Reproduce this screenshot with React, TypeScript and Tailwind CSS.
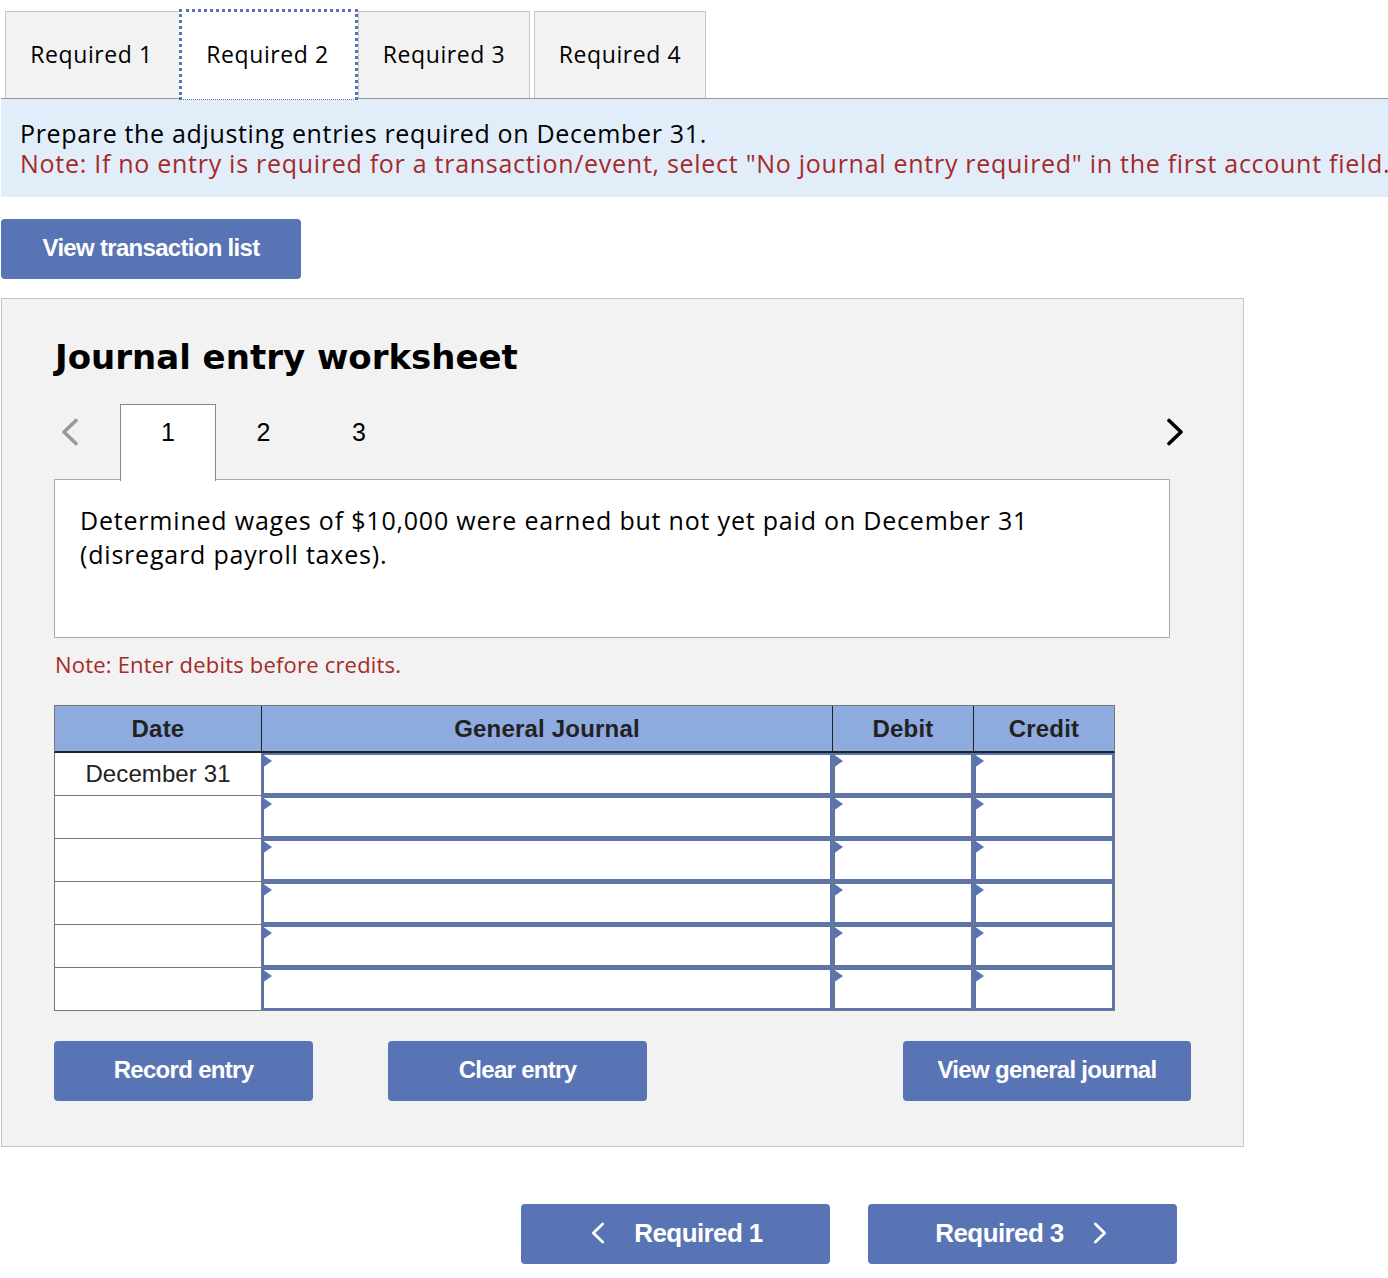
const tabs = ["Required 1", "Required 2", "Required 3", "Required 4"];

function Chevron({ dir, className }: { dir: "left" | "right"; className: string }) {
  return (
    <svg viewBox="0 0 18 28" fill="none" stroke="currentColor" strokeWidth="3.6" strokeLinecap="round" strokeLinejoin="round" className={className}>
      <polyline points={dir === "left" ? "15,2.5 3,14 15,25.5" : "3,2.5 15,14 3,25.5"} />
    </svg>
  );
}

function ActionButton({ label, className }: { label: string; className: string }) {
  return (
    <button
      className={`h-[60px] rounded-[4px] bg-[#5874b5] pb-[2px] text-[24px] font-bold tracking-[-0.7px] text-white font-['Liberation_Sans',sans-serif] ${className}`}
    >
      {label}
    </button>
  );
}

function EntryCell() {
  return (
    <div className="relative h-[43px] border-b border-l border-[#777]">
      <div className="h-full border-2 border-[#5874b5] bg-white" />
      <span className="absolute left-0 top-[1px] h-0 w-0 border-y-[7px] border-l-[10px] border-y-transparent border-l-[#5874b5]" />
    </div>
  );
}

export default function App() {
  return (
    <div className="h-[1278px] w-[1388px] overflow-hidden bg-white font-['DejaVu_Sans',sans-serif] text-black">
      {/* Required tabs */}
      <div className="ml-[1px] flex h-[99px] items-end border-b border-[#999] pl-[4px]">
        {tabs.map((tab, i) =>
          i === 1 ? (
            <div
              key={tab}
              className="relative z-10 mb-[-2px] ml-[-1px] h-[91px] w-[179px] border-[3px] border-b border-dotted border-[#5874b5] bg-white pr-[2px] pt-[25px] text-center text-[23px] tracking-[0.6px] font-['Open_Sans',sans-serif]"
            >
              {tab}
            </div>
          ) : (
            <div
              key={tab}
              className={`h-[87px] border border-b-0 border-[#c4c4c4] bg-[#f2f2f2] pt-[25px] text-center text-[23px] tracking-[0.6px] font-['Open_Sans',sans-serif] ${
                i === 0 ? "w-[175px] pr-[2px]" : i === 2 ? "mr-[4px] w-[172px]" : "w-[172px]"
              }`}
            >
              {tab}
            </div>
          )
        )}
      </div>

      {/* Instructions */}
      <div className="ml-[1px] h-[98px] bg-[#e1edf9] pl-[19px] pt-[19px] text-[25px] leading-[30px] tracking-[0.66px] whitespace-nowrap font-['Open_Sans',sans-serif]">
        <div>Prepare the adjusting entries required on December 31.</div>
        <div className="tracking-[0.72px] text-[#a52a2a]">
          Note: If no entry is required for a transaction/event, select "No journal entry required" in the first account field.
        </div>
      </div>

      <ActionButton label="View transaction list" className="ml-[1px] mt-[22px] block w-[300px]" />

      {/* Worksheet panel */}
      <div className="ml-[1px] mt-[19px] h-[849px] w-[1243px] border border-[#c4c4c4] bg-[#f2f2f2] pl-[52px]">
        <h2 className="pl-[1px] pt-[36px] text-[34px] font-bold leading-[44px]">Journal entry worksheet</h2>

        <div className="mt-[25px] flex h-[77px] w-[1116px] items-start text-[25px] font-['Liberation_Sans',sans-serif]">
          <div className="flex h-[56px] w-[66px] items-center">
            <Chevron dir="left" className="ml-[7px] h-[28px] w-[18px] text-[#999]" />
          </div>
          <div className="relative z-10 flex h-[77px] w-[96px] items-start justify-center border border-b-0 border-[#888] bg-white pt-[9px]">1</div>
          <div className="w-[95px] pt-[10px] text-center">2</div>
          <div className="w-[96px] pt-[10px] text-center">3</div>
          <div className="ml-auto flex h-[56px] items-center">
            <Chevron dir="right" className="mr-[-14px] h-[28px] w-[18px] text-black" />
          </div>
        </div>

        <div className="relative mt-[-2px] h-[159px] w-[1116px] border border-[#aaa] bg-white px-[25px] pt-[23px] text-[25px] leading-[34px] tracking-[0.8px] font-['Open_Sans',sans-serif]">
          Determined wages of $10,000 were earned but not yet paid on December 31 (disregard payroll taxes).
        </div>

        <div className="mt-[11px] pl-[1px] text-[22px] leading-[30px] tracking-[0.2px] text-[#a52a2a] font-['Open_Sans',sans-serif]">Note: Enter debits before credits.</div>

        {/* Journal table */}
        <div className="mt-[26px] w-[1061px] font-['Liberation_Sans',sans-serif] text-[24px] text-[#222]">
          <div className="grid h-[48px] grid-cols-[206px_571px_141px_141px] items-stretch border border-b-2 border-[#777] border-b-[#222] bg-[#8eabe0] font-bold tracking-[0.2px]">
            <div className="flex items-center justify-center">Date</div>
            <div className="flex items-center justify-center border-l border-[#222]">General Journal</div>
            <div className="flex items-center justify-center border-l border-[#222]">Debit</div>
            <div className="flex items-center justify-center border-l border-[#222]">Credit</div>
          </div>
          {[0, 1, 2, 3, 4, 5].map((row) => (
            <div key={row} className="grid grid-cols-[207px_571px_141px_142px]">
              <div className="flex h-[43px] items-center justify-center border-b border-l border-[#777] bg-white tracking-[0.1px]">
                {row === 0 ? "December 31" : ""}
              </div>
              <EntryCell />
              <EntryCell />
              <div className="border-r border-[#777]">
                <EntryCell />
              </div>
            </div>
          ))}
        </div>

        <div className="mt-[30px] flex w-[1137px]">
          <ActionButton label="Record entry" className="w-[259px]" />
          <ActionButton label="Clear entry" className="ml-[75px] w-[259px]" />
          <ActionButton label="View general journal" className="ml-auto w-[288px]" />
        </div>
      </div>

      {/* Bottom navigation */}
      <div className="ml-[521px] mt-[57px] flex gap-[38px]">
        <button className="flex h-[60px] w-[309px] items-center justify-center gap-[29px] rounded-[4px] bg-[#5874b5] pb-[2px] pl-[3px] text-[26px] font-bold tracking-[-0.6px] text-white font-['Liberation_Sans',sans-serif]">
          <Chevron dir="left" className="h-[22px] w-[14px]" />
          Required 1
        </button>
        <button className="flex h-[60px] w-[309px] items-center justify-center gap-[29px] rounded-[4px] bg-[#5874b5] pb-[2px] pr-[3px] text-[26px] font-bold tracking-[-0.6px] text-white font-['Liberation_Sans',sans-serif]">
          Required 3
          <Chevron dir="right" className="h-[22px] w-[14px]" />
        </button>
      </div>
    </div>
  );
}
